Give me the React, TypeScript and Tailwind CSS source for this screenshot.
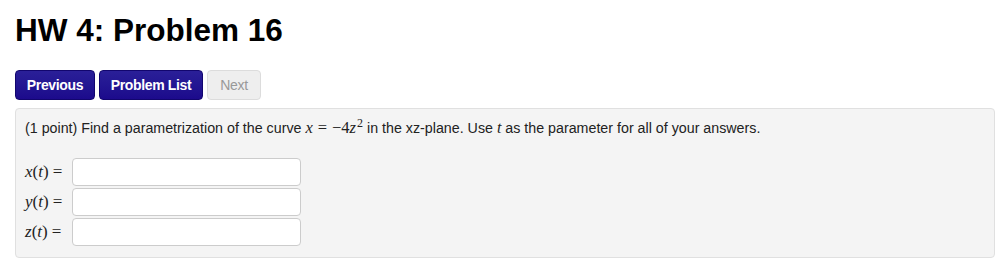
import React from 'react';

const serif = { fontFamily: '"Liberation Serif", "DejaVu Serif", serif' };

const MathLabel: React.FC<{ v: string }> = ({ v }) => (
  <span className="text-[17px] text-[#222] whitespace-nowrap" style={serif}>
    <i>{v}</i>(<i>t</i>)<span className="ml-[4px]">=</span>
  </span>
);

const App: React.FC = () => {
  const rows = ['x', 'y', 'z'];
  return (
    <div className="w-[1002px] h-[268px] bg-white pl-[15px] pr-[7px] font-['Liberation_Sans',Arial,sans-serif] text-[#222]">
      <h1 className="pt-[13px] text-[31.5px] font-bold leading-[34px] text-black">HW 4: Problem 16</h1>

      <div className="mt-[23px] flex gap-[4px]">
        <button className="w-[80px] h-[30px] rounded-[4px] border border-[#12066e] bg-gradient-to-b from-[#2a1f98] to-[#1c0a8c] text-white text-[14px] font-bold tracking-tight">Previous</button>
        <button className="w-[104px] h-[30px] rounded-[4px] border border-[#12066e] bg-gradient-to-b from-[#2a1f98] to-[#1c0a8c] text-white text-[14px] font-bold tracking-tight">Problem List</button>
        <button className="w-[54px] h-[30px] rounded-[4px] border border-[#dcdcdc] bg-[#eeeeee] text-[#999] text-[14px] tracking-tight">Next</button>
      </div>

      <div className="mt-[8px] h-[150px] rounded-[4px] border border-[#e0e0e0] bg-[#f4f4f4] pl-[9px] pt-[9px]">
        <p className="text-[14.25px] leading-[20px]">
          (1 point) Find a parametrization of the curve{' '}
          <span className="text-[16.5px]" style={serif}>
            <i>x</i><span className="mx-[5px]">=</span>−4<i>z</i><sup className="text-[12px] ml-[1px]">2</sup>
          </span>{' '}
          in the xz-plane. Use <i style={serif} className="text-[16px]">t</i> as the parameter for all of your answers.
        </p>

        <div className="mt-[20px] flex flex-col gap-[2px]">
          {rows.map(v => (
            <div key={v} className="flex items-center">
              <div className="w-[47px]">
                <MathLabel v={v} />
              </div>
              <input className="w-[229px] h-[28px] rounded-[4px] border border-[#cccccc] bg-white" />
            </div>
          ))}
        </div>
      </div>
    </div>
  );
};

export default App;
